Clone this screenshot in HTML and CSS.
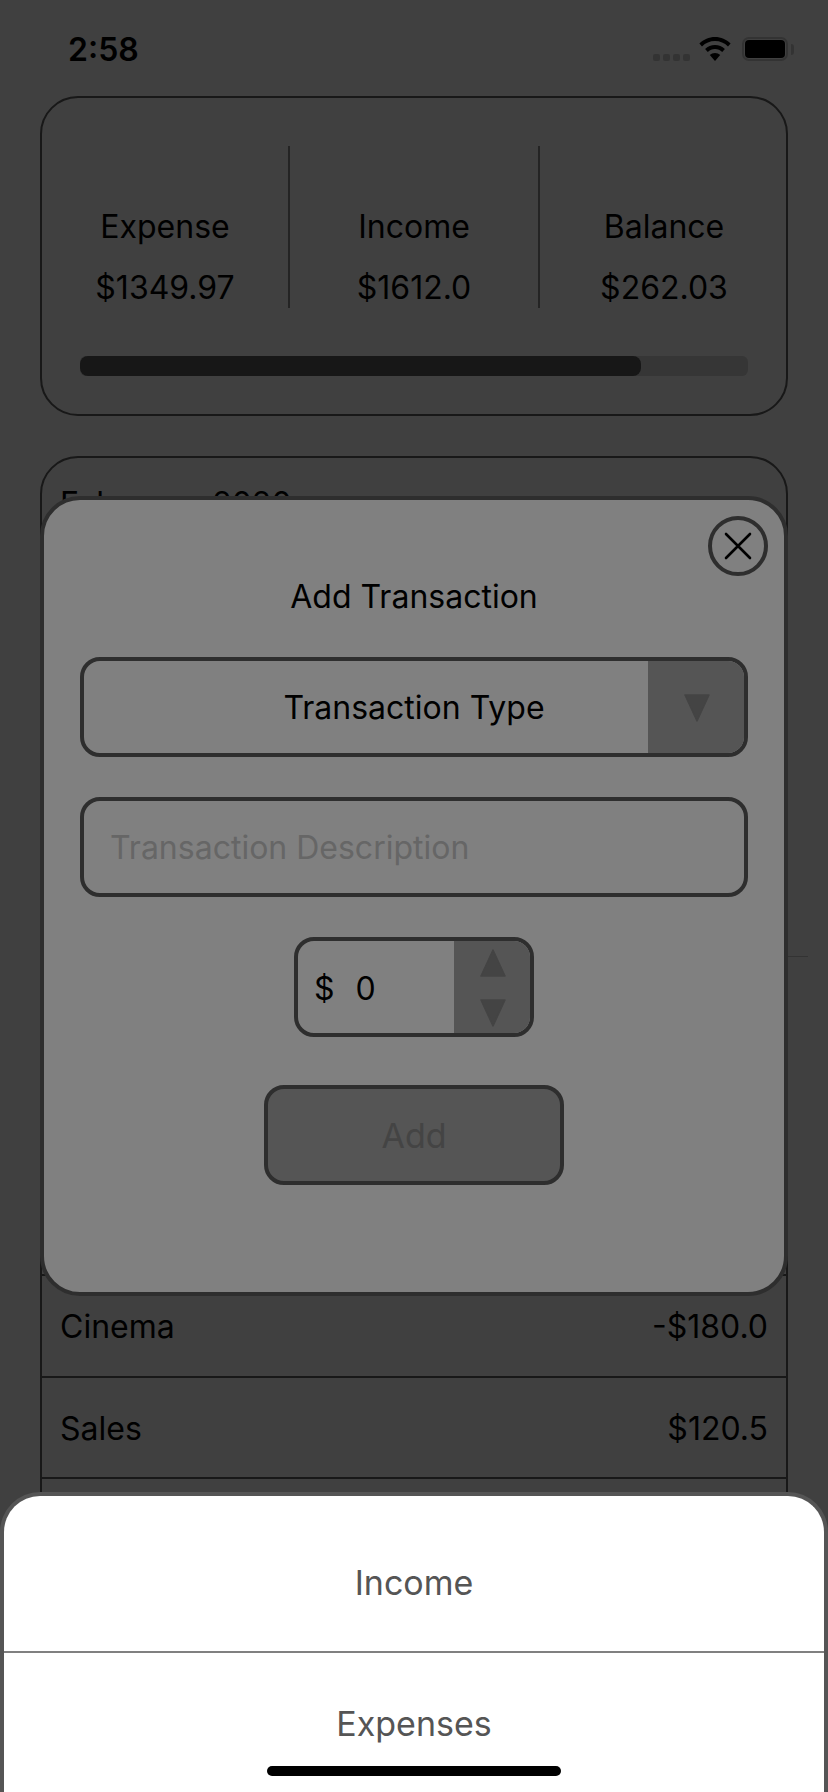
FILE: index.html
```html
<!DOCTYPE html>
<html lang="en">
<head>
<meta charset="utf-8">
<title>Add Transaction</title>
<link rel="stylesheet" href="styles.css">
</head>
<body>
<div class="app">
  <header class="status">
    <span class="time">2:58</span>
    <div class="status-icons">
      <div class="signal"><i></i><i></i><i></i><i></i></div>
      <svg class="wifi" width="32" height="24" viewBox="0 0 32 24"><path d="M16 0C10 0 4.600 2.400 0.400 6.500L3 9.400C6.500 6 11 4 16 4s9.500 2 13 5.400l2.600-2.900C27.400 2.400 22 0 16 0z"/><path d="M16 8c-3.800 0-7.200 1.500-9.900 4l2.700 2.900C10.700 13.100 13.200 12 16 12s5.300 1.100 7.200 2.900l2.700-2.900C23.200 9.500 19.800 8 16 8z"/><path d="M16 16c-2 0-3.900 0.800-5.200 2.100L16 24l5.200-5.900C19.900 16.800 18 16 16 16z"/></svg>
      <div class="battery"><div class="battery-body"><div class="battery-level"></div></div><div class="battery-cap"></div></div>
    </div>
  </header>
  <section class="summary">
    <div class="stats">
      <div class="stat"><span>Expense</span><span>$1349.97</span></div>
      <div class="stat"><span>Income</span><span>$1612.0</span></div>
      <div class="stat"><span>Balance</span><span>$262.03</span></div>
    </div>
    <div class="progress"><div class="progress-fill"></div></div>
  </section>
  <section class="list">
    <div class="list-head">February, 2020</div>
    <div class="row"><span>Cinema</span><span>-$180.0</span></div>
    <div class="row"><span>Sales</span><span>$120.5</span></div>
    <div class="row"></div>
  </section>
</div>
<div class="stray-line"></div>
<div class="modal">
  <button class="close" type="button" aria-label="Close">
    <svg width="28" height="28" viewBox="0 0 28 28"><path d="M2 2L26 26M26 2L2 26"/></svg>
  </button>
  <h2 class="modal-title">Add Transaction</h2>
  <div class="field select">
    <span class="select-label">Transaction Type</span>
    <div class="side select-side"><svg width="28" height="28" viewBox="0 0 28 28"><path d="M2 1H26L14 27Z"/></svg></div>
  </div>
  <div class="field input"><span>Transaction Description</span></div>
  <div class="stepper">
    <div class="amount"><span>$</span><span>0</span></div>
    <div class="side stepper-side">
      <svg width="28" height="28" viewBox="0 0 28 28"><path d="M2 27H26L14 1Z"/></svg>
      <svg width="28" height="28" viewBox="0 0 28 28"><path d="M2 1H26L14 27Z"/></svg>
    </div>
  </div>
  <button class="add" type="button">Add</button>
</div>
<div class="sheet">
  <div class="sheet-item">Income</div>
  <div class="sheet-item sheet-second">Expenses</div>
</div>
<div class="home"></div>
</body>
</html>
```
FILE: styles.css
```css
* { box-sizing: border-box; }
html, body { margin: 0; padding: 0; }
body {
  position: relative;
  width: 828px;
  height: 1792px;
  overflow: hidden;
  background: #404040;
  color: #000;
  font-family: Inter, "Liberation Sans", sans-serif;
  font-size: 32px;
}
.app { padding: 0 40px; }
.status {
  height: 96px;
  display: flex;
  justify-content: space-between;
  margin-right: -6px;
  padding: 32px 0 0 28px;
}
.time { font-size: 32px; font-weight: 600; line-height: 36px; }
.status-icons { display: flex; gap: 9px; padding-top: 5px; align-items: flex-start; }
.signal { display: flex; gap: 3px; margin-top: 17px; }
.signal i { width: 7px; height: 7px; border-radius: 2px; background: #333; }
.wifi { margin-right: 2px; }
.wifi path { fill: #000; }
.battery { display: flex; align-items: center; gap: 3px; }
.battery-body { width: 46px; height: 24px; border: 2px solid #333; border-radius: 7px; padding: 1px; }
.battery-level { height: 100%; background: #000; border-radius: 4px; }
.battery-cap { width: 3px; height: 11px; background: #333; border-radius: 0 3px 3px 0; }
.summary {
  height: 320px;
  border: 2px solid #181818;
  border-radius: 38px;
  padding: 48px 0 0;
}
.stats { display: grid; grid-template-columns: 246px 250px 1fr; height: 160px; }
.stat {
  display: flex;
  flex-direction: column;
  align-items: center;
  padding-top: 61px;
  gap: 21px;
  line-height: 40px;
}
.stat + .stat { border-left: 2px solid #242424; }
.stat:last-child { padding-left: 2px; }
.progress { margin: 50px 38px 0; height: 20px; background: #363636; border-radius: 6px; }
.progress-fill { width: 561px; height: 100%; background: #171717; border-radius: 8px; }
.list {
  margin-top: 40px;
  height: 1400px;
  border: 2px solid #181818;
  border-radius: 38px 38px 0 0;
}
.list-head { height: 816px; padding: 26px 18px 0; line-height: 40px; }
.row {
  height: 101.500px;
  display: flex;
  justify-content: space-between;
  padding: 31px 18px 0;
  line-height: 40px;
  border-top: 2px solid #181818;
}
.stray-line { position: absolute; left: 788px; top: 956px; width: 20px; height: 1px; background: #333; }
.modal {
  position: absolute;
  left: 40px;
  top: 496px;
  width: 748px;
  height: 800px;
  background: #808080;
  border: 4px solid #2e2e2e;
  border-radius: 40px;
  padding: 77px 36px 0;
  display: flex;
  flex-direction: column;
  align-items: center;
}
.close {
  position: absolute;
  top: 16px;
  right: 16px;
  width: 60px;
  height: 60px;
  padding: 0;
  background: none;
  border: 4px solid #2e2e2e;
  border-radius: 50%;
  display: flex;
  align-items: center;
  justify-content: center;
}
.close path { stroke: #000; stroke-width: 2.600; stroke-linecap: round; fill: none; }
.modal-title { margin: 0; height: 80px; font-size: 32px; font-weight: 400; line-height: 40px; }
.field {
  width: 668px;
  height: 100px;
  flex: none;
  border: 4px solid #2e2e2e;
  border-radius: 20px;
  overflow: hidden;
}
.side { background: #555; }
.side path { fill: #444; stroke: #444; stroke-width: 1.500; stroke-linejoin: round; }
.select { display: flex; margin-bottom: 40px; }
.select-label { flex: 1; text-align: center; padding: 22px 0 0 96px; line-height: 50px; }
.select-side { width: 96px; display: flex; align-items: center; justify-content: center; padding: 2px 0 0 2px; }
.input { margin-bottom: 40px; padding: 1px 26px 0; line-height: 92px; color: #666; }
.stepper {
  width: 240px;
  height: 100px;
  flex: none;
  border: 4px solid #2e2e2e;
  border-radius: 20px;
  overflow: hidden;
  display: flex;
  margin-bottom: 48px;
}
.amount { flex: 1; display: flex; gap: 21px; padding: 2px 0 0 16px; line-height: 92px; }
.stepper-side { width: 76px; display: flex; flex-direction: column; align-items: center; justify-content: center; gap: 22px; padding: 1px 0 0 2px; }
.add {
  width: 300px;
  height: 100px;
  flex: none;
  background: #555;
  border: 4px solid #2e2e2e;
  border-radius: 20px;
  color: #444;
  font: inherit;
  font-size: 34px;
  padding: 0;
}
.sheet {
  position: absolute;
  left: 0;
  top: 1492px;
  width: 828px;
  height: 300px;
  background: #fff;
  border: 4px solid #555;
  border-bottom: 0;
  border-radius: 40px 40px 0 0;
  color: #555;
  font-size: 34px;
  text-align: center;
}
.sheet-item { height: 155px; padding-top: 67px; line-height: 40px; }
.sheet-second { border-top: 2px solid #808080; padding-top: 51px; }
.home { position: absolute; left: 267px; top: 1766px; width: 294px; height: 10px; border-radius: 5px; background: #000; }
```
